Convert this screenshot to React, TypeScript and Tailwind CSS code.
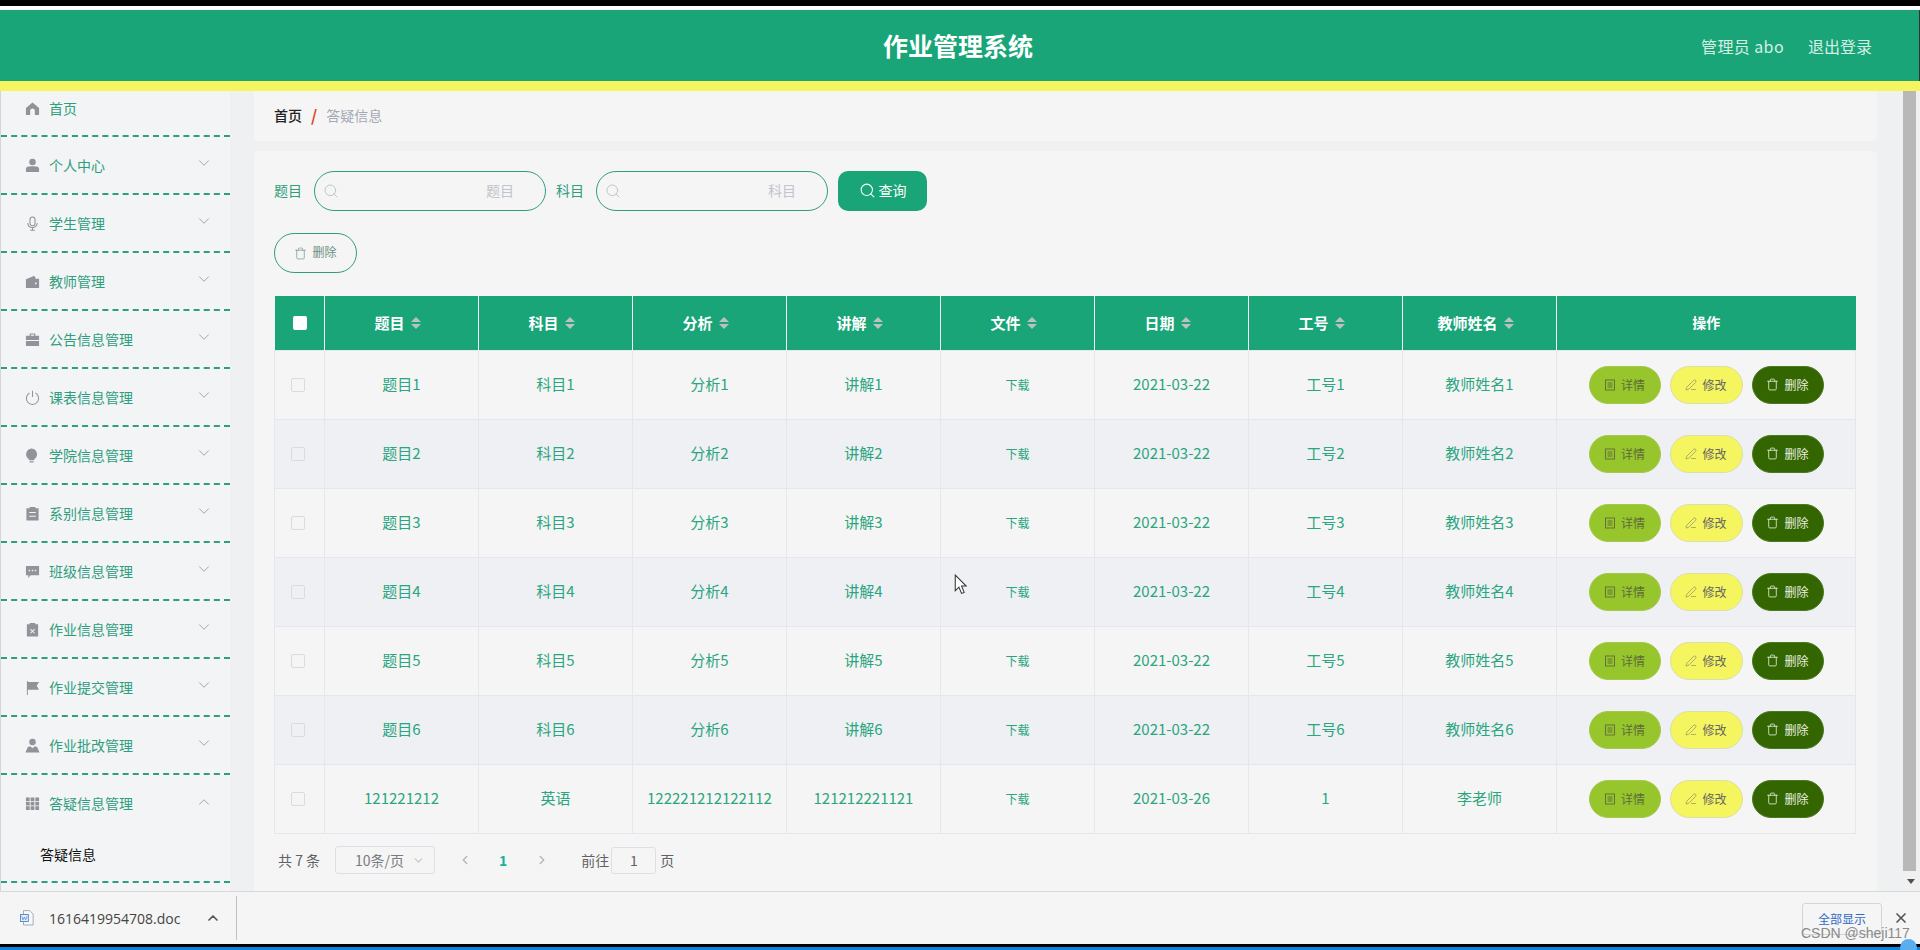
import { ChevronDown, ChevronLeft, ChevronRight, ChevronUp, PenLine, Search, Trash, X } from "lucide-react";
import type { ReactNode } from "react";

const Svg = ({ children }: { children: ReactNode }) => (
  <svg viewBox="0 0 16 16" className="w-[15px] h-[15px] shrink-0" fill="#909399">
    {children}
  </svg>
);

const icons: Record<string, ReactNode> = {
  home: <Svg><path d="M8 1.500 15 7.500V15H10.500V10.500A2.500 2.500 0 0 0 5.500 10.500V15H1V7.500Z" /></Svg>,
  user: <Svg><circle cx="8" cy="4.200" r="3.500" /><path d="M1 15V11.500C1 9.500 3 8.700 8 8.700S15 9.500 15 11.500V15Z" /></Svg>,
  mic: (
    <Svg>
      <rect x="5.300" y="1" width="5.400" height="9.500" rx="2.700" fill="none" stroke="#909399" strokeWidth="1.100" />
      <path d="M3 7.500C3 14 13 14 13 7.500M8 12.500V15M5.500 15.300H10.500" fill="none" stroke="#909399" strokeWidth="1.100" />
    </Svg>
  ),
  wallet: <Svg><path d="M1 5.500 10 1.800 11.500 5H15V15H1Z" /><circle cx="11.500" cy="10" r="1" fill="#f3f4f5" /></Svg>,
  case: <Svg><path d="M5 4V1.500H11V4H15V8.500H1V4ZM6.200 4H9.800V2.700H6.200ZM1 9.700H15V15H1Z" /></Svg>,
  power: (
    <Svg>
      <path d="M4.800 3.200A6.500 6.500 0 1 0 11.200 3.200M8 .8V7.500" fill="none" stroke="#909399" strokeWidth="1.100" />
    </Svg>
  ),
  bulb: <Svg><path d="M7 .5A6.300 6.300 0 0 1 10 12L9.500 13H4.500L4 12A6.300 6.300 0 0 1 7 .5ZM4.800 14H9.200V15.500H4.800Z" /></Svg>,
  order: (
    <Svg>
      <path d="M5 1H11V2.500H14.500V15.500H1.500V2.500H5Z" />
      <path d="M4.500 7H11.500M4.500 11H11.500" stroke="#f3f4f5" strokeWidth="1.100" />
    </Svg>
  ),
  chat: (
    <Svg>
      <path d="M1 2H15V12H6L3.500 14.800V12H1Z" />
      <path d="M4 7H5.500M7.300 7H8.800M10.500 7H12" stroke="#f3f4f5" strokeWidth="1.500" />
    </Svg>
  ),
  release: (
    <Svg>
      <path d="M5 1H11V2.500H14V15.500H2V2.500H5Z" />
      <path d="M5.800 7.500 10.200 12M10.200 7.500 5.800 12" stroke="#f3f4f5" strokeWidth="1.100" />
    </Svg>
  ),
  flag: <Svg><path d="M2 1H3V16H2ZM3 2H15L12.500 6 15 10.500H3Z" /></Svg>,
  custom: <Svg><circle cx="8" cy="4.300" r="3.500" /><path d="M.5 15.500 3 9.500 5.500 8.700 8 11 10.500 8.700 13 9.500 15.500 15.500Z" /></Svg>,
  grid: (
    <Svg>
      <path d="M1 1.500H5V5.500H1ZM6 1.500H10V5.500H6ZM11 1.500H15V5.500H11ZM1 6.500H5V10H1ZM6 6.500H10V10H6ZM11 6.500H15V10H11ZM1 11H5V15H1ZM6 11H10V15H6ZM11 11H15V15H11Z" />
    </Svg>
  ),
};

const menu = [
  { name: "个人中心", icon: "user" },
  { name: "学生管理", icon: "mic" },
  { name: "教师管理", icon: "wallet" },
  { name: "公告信息管理", icon: "case" },
  { name: "课表信息管理", icon: "power" },
  { name: "学院信息管理", icon: "bulb" },
  { name: "系别信息管理", icon: "order" },
  { name: "班级信息管理", icon: "chat" },
  { name: "作业信息管理", icon: "release" },
  { name: "作业提交管理", icon: "flag" },
  { name: "作业批改管理", icon: "custom" },
];

const columns = ["题目", "科目", "分析", "讲解", "文件", "日期", "工号", "教师姓名"];

const rows = [
  ["题目1", "科目1", "分析1", "讲解1", "2021-03-22", "工号1", "教师姓名1"],
  ["题目2", "科目2", "分析2", "讲解2", "2021-03-22", "工号2", "教师姓名2"],
  ["题目3", "科目3", "分析3", "讲解3", "2021-03-22", "工号3", "教师姓名3"],
  ["题目4", "科目4", "分析4", "讲解4", "2021-03-22", "工号4", "教师姓名4"],
  ["题目5", "科目5", "分析5", "讲解5", "2021-03-22", "工号5", "教师姓名5"],
  ["题目6", "科目6", "分析6", "讲解6", "2021-03-22", "工号6", "教师姓名6"],
  ["121221212", "英语", "122221212122112", "121212221121", "2021-03-26", "1", "李老师"],
];

const DetailIcon = () => (
  <svg viewBox="0 0 12 12" className="w-[12px] h-[12px]" fill="none" stroke="#5f6b3a" strokeWidth="0.900">
    <rect x="1.500" y="1" width="9" height="10" />
    <path d="M3.500 4H8.500M3.500 6H8.500M3.500 8H8.500" />
  </svg>
);

const SearchField = ({ label }: { label: string }) => (
  <>
    <span className="mb-[2px] text-[14px] text-[#2f9e7e] whitespace-nowrap">{label}</span>
    <div className="flex items-center w-[232px] h-[40px] rounded-[20px] border border-[#2f9e7e] pl-[8px] pr-[31px] ml-[12px]">
      <Search size={16} color="#c0c4cc" strokeWidth={1.500} />
      <span className="ml-auto mb-[2px] text-[14px] text-[#c0c4cc]">{label}</span>
    </div>
  </>
);

const App = () => {
  return (
    <div className="relative flex flex-col h-[950px] w-[1920px] overflow-hidden bg-white font-['Noto_Sans_CJK_SC',sans-serif]">
      <div className="h-[6px] bg-black" />
      <div className="h-[4px] bg-white" />

      <header className="flex items-center h-[71px] bg-[#19a578] relative border-r border-[#333]">
        <div className="flex-1 text-center pr-[3px] text-[25px] font-bold text-white">作业管理系统</div>
        <div className="absolute right-[47px] flex gap-[24px] text-[16px] text-[#d5efe5]">
          <span className="tracking-[0.4px]">管理员 abo</span>
          <span>退出登录</span>
        </div>
      </header>
      <div className="h-[10px] bg-[#f5f55f]" />

      <div className="flex h-[800px]">
        <aside className="w-[230px] shrink-0 bg-[#f3f4f5] border-l border-[#d4d4d4]">
          <div className="flex items-center h-[46px] pb-[9px] pl-[24px] gap-[9px] border-b-2 border-dashed border-[#2f9e7e]">
            {icons.home}
            <span className="text-[14px] text-[#2f9e7e]">首页</span>
          </div>
          {menu.map((item) => (
            <div
              key={item.name}
              className="flex items-center h-[58px] pl-[24px] pr-[17px] gap-[9px] border-b-2 border-dashed border-[#2f9e7e]"
            >
              {icons[item.icon]}
              <span className="text-[14px] text-[#2f9e7e]">{item.name}</span>
              <ChevronDown size={18} color="#a0a3aa" strokeWidth={1.300} className="ml-auto mb-[4px]" />
            </div>
          ))}
          <div className="border-b-2 border-dashed border-[#2f9e7e]">
            <div className="flex items-center h-[58px] pb-[1px] pl-[24px] pr-[17px] gap-[9px]">
              {icons.grid}
              <span className="text-[14px] text-[#2f9e7e]">答疑信息管理</span>
              <ChevronUp size={18} color="#a0a3aa" strokeWidth={1.300} className="ml-auto mb-[4px]" />
            </div>
            <div className="flex items-center h-[48px] pb-[5px] pl-[39px] text-[14px] text-[#111]">答疑信息</div>
          </div>
        </aside>

        <main className="flex-1 bg-[#eff0f2] pl-[24px] pr-[26px] overflow-hidden">
          <div className="flex items-center h-[50px] pb-[2px] px-[20px] rounded-b-[4px] bg-[#f5f5f5] text-[14px]">
            <span className="text-[#222] font-medium">首页</span>
            <span className="mx-[9px] text-[16px] text-[#e0452a] font-bold">/</span>
            <span className="text-[#a3a9b6]">答疑信息</span>
          </div>

          <div className="mt-[10px] h-[800px] rounded-[4px] bg-[#f5f5f5] px-[20px] pt-[20px]">
            <div className="flex items-center h-[40px]">
              <SearchField label="题目" />
              <div className="w-[10px]" />
              <SearchField label="科目" />
              <button className="flex items-center justify-center gap-[3px] ml-[10px] w-[89px] h-[40px] pb-[1px] rounded-[10px] bg-[#19a578] text-[14px] text-white">
                <Search size={17} strokeWidth={1.500} />
                查询
              </button>
            </div>

            <button className="flex items-center justify-center gap-[5px] mt-[22px] w-[83px] h-[40px] rounded-[20px] border border-[#2f9e7e] text-[12px] text-[#6b8f80]">
              <Trash size={13} strokeWidth={1.200} />
              <span className="mb-[2px]">删除</span>
            </button>

            <table className="mt-[23px] w-[1582px] table-fixed border-collapse text-center text-[15px] text-[#2aa580]">
              <colgroup>
                <col className="w-[50px]" />
                <col span={8} className="w-[154px]" />
                <col />
              </colgroup>
              <thead>
                <tr className="h-[54px] bg-[#19a578] text-white">
                  <th className="border-r border-[#f5f5f5]">
                    <span className="block w-[14px] h-[14px] ml-[18px] rounded-[2px] bg-white" />
                  </th>
                  {columns.map((col) => (
                    <th key={col} className="border-r border-[#f5f5f5] font-bold">
                      <span className="inline-flex items-center gap-[6px] pr-[8px]">
                        {col}
                        <span className="flex flex-col gap-[2px]">
                          <span className="w-0 h-0 border-x-[5px] border-x-transparent border-b-[5px] border-b-[#b9c2bd]" />
                          <span className="w-0 h-0 border-x-[5px] border-x-transparent border-t-[5px] border-t-[#b9c2bd]" />
                        </span>
                      </span>
                    </th>
                  ))}
                  <th className="font-bold text-[14px]">操作</th>
                </tr>
              </thead>
              <tbody>
                {rows.map((row, i) => (
                  <tr key={row[0]} className={i % 2 === 1 ? "h-[69px] bg-[#eef0f3]" : "h-[69px] bg-[#f5f5f5]"}>
                    <td className="border border-[#e4e7ed]">
                      <span className="block w-[14px] h-[14px] ml-[16px] rounded-[2px] border border-[#d8dbe0]" />
                    </td>
                    {row.slice(0, 4).map((cell) => (
                      <td key={cell} className="border border-[#e4e7ed]">{cell}</td>
                    ))}
                    <td className="border border-[#e4e7ed] text-[12px]">下载</td>
                    {row.slice(4).map((cell) => (
                      <td key={cell} className="border border-[#e4e7ed]">{cell}</td>
                    ))}
                    <td className="border border-[#e4e7ed]">
                      <div className="flex justify-center gap-[9px] text-[12px]">
                        <button className="flex items-center justify-center gap-[5px] w-[72px] h-[38px] rounded-[19px] border border-[#a5c850] bg-[#96c52c] text-[#5f6b3a]">
                          <DetailIcon />
                          详情
                        </button>
                        <button className="flex items-center justify-center gap-[5px] w-[73px] h-[38px] rounded-[19px] border border-[#dcdfa8] bg-[#f5f55f] text-[#666]">
                          <PenLine size={12} strokeWidth={1} />
                          修改
                        </button>
                        <button className="flex items-center justify-center gap-[5px] w-[72px] h-[38px] rounded-[19px] border border-[#4a7a22] bg-[#336600] text-[#e8efe0]">
                          <Trash size={13} strokeWidth={1.500} />
                          删除
                        </button>
                      </div>
                    </td>
                  </tr>
                ))}
              </tbody>
            </table>

            <div className="flex items-center mt-[12px] h-[29px] pl-[4px] text-[14px] text-[#606266]">
              <span>共 7 条</span>
              <div className="flex items-center ml-[15px] w-[100px] h-[28px] pl-[19px] pr-[9px] rounded-[3px] border border-[#dcdfe6] text-[#787b82]">
                10条/页
                <ChevronDown size={13} color="#c0c4cc" className="ml-auto" />
              </div>
              <ChevronLeft size={14} color="#b4b7bd" strokeWidth={2.500} className="ml-[23px]" />
              <span className="ml-[27px] font-bold text-[#19b394]">1</span>
              <ChevronRight size={14} color="#b4b7bd" strokeWidth={2.500} className="ml-[28px]" />
              <span className="ml-[32px]">前往</span>
              <div className="flex items-center justify-center ml-[2px] w-[45px] h-[27px] rounded-[3px] border border-[#dcdfe6]">1</div>
              <span className="ml-[4px]">页</span>
            </div>
          </div>
        </main>

        {/* scrollbar */}
        <div className="flex flex-col w-[15px] shrink-0 bg-[#f0f0f0]">
          <div className="h-[780px] w-[13px] bg-[#b8b8b8]" />
          <div className="mx-auto mt-[8px] w-0 h-0 border-x-[4px] border-x-transparent border-t-[5px] border-t-[#505050]" />
        </div>
        <div className="w-[2px] bg-[#f0f0f0]" />
      </div>

      {/* download bar */}
      <div className="flex items-center h-[53px] bg-[#f5f5f5] border-t border-[#d8d8d8]">
        <svg viewBox="0 0 16 18" className="ml-[20px] w-[14px] h-[16px]" fill="none">
          <path d="M4 .5H11L15 4.500V17H4Z" fill="#f5f8fc" stroke="#9aa4b2" />
          <rect x=".5" y="5" width="9" height="8" fill="#e4edf9" stroke="#4d7ec9" />
          <path d="M2 7 3.500 11 5 8 6.500 11 8 7" stroke="#4d7ec9" strokeWidth=".8" />
        </svg>
        <span className="ml-[15px] text-[14px] text-[#444] font-['Open_Sans',sans-serif]">1616419954708.doc</span>
        <ChevronUp size={16} color="#555" strokeWidth={2.500} className="ml-[25px]" />
        <div className="ml-[15px] w-px h-[44px] bg-[#c0c0c0]" />
        <button className="ml-auto mt-[2px] w-[80px] h-[32px] rounded-[3px] border border-[#d4d4d4] text-[12px] text-[#2e6bc6]">全部显示</button>
        <X size={16} color="#555" strokeWidth={2.500} className="ml-[11px] mr-[11px]" />
      </div>
      <div className="h-[3px] bg-black" />
      <div className="h-[3px] bg-[#0a84e0]" />

      {/* mouse cursor */}
      <svg viewBox="0 0 12 20" className="absolute left-[954px] top-[574px] w-[13px] h-[21px]" fill="#fff" stroke="#333" strokeWidth="1">
        <path d="M1 1V16L4.500 12.500 7 18.500 9.500 17.500 7 11.500H11.500Z" />
      </svg>
      <span className="absolute left-[1801px] top-[923px] text-[14px] text-[#8a8a8a] font-['Liberation_Sans',sans-serif]">CSDN @sheji117</span>
      <div className="absolute left-[1900px] top-[939px] w-[17px] h-[17px] rounded-full bg-[#5aaef0]" />
    </div>
  );
};

export default App;
